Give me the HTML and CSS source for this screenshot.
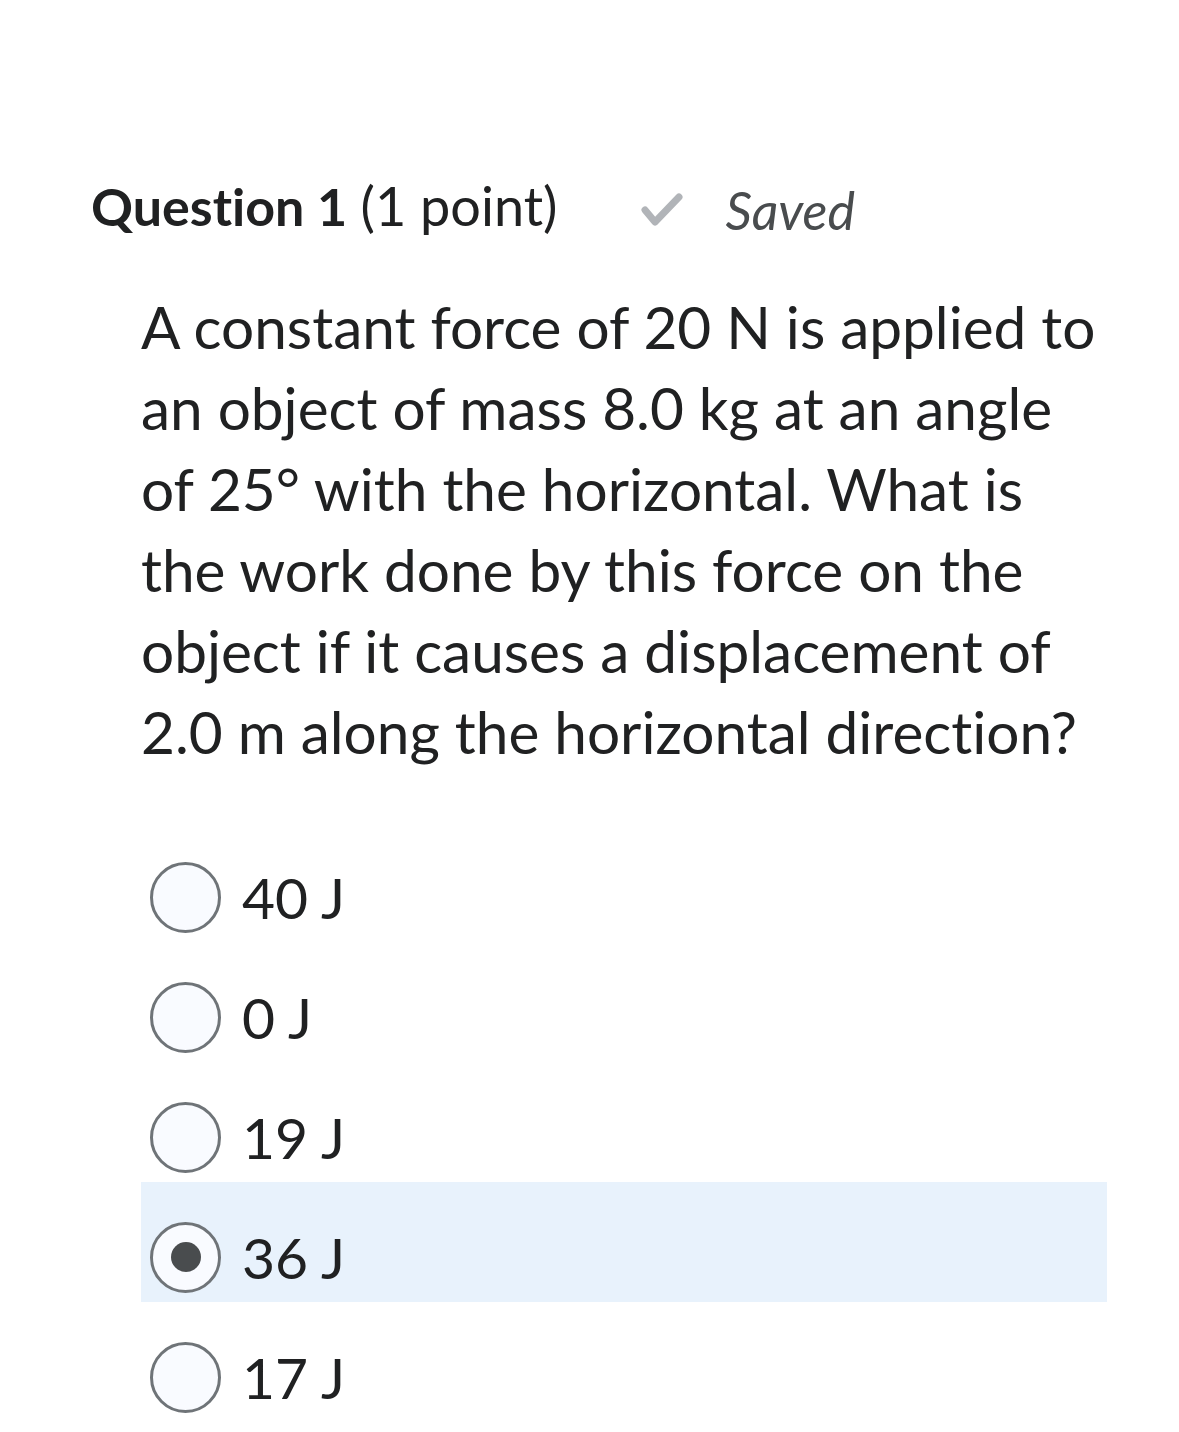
FILE: index.html
```html
<!DOCTYPE html>
<html>
<head>
    <meta name="viewport" content="width=device-width, initial-scale=1.0">
    <link rel="stylesheet" href="styles.css">
</head>
<body>
<div class="question">
    <div class="question-header">
        <h2 class="question-title"><strong>Question 1</strong> <span class="points">(1 point)</span></h2>
        <div class="saved">
            <svg class="check" width="46" height="36" viewBox="0 0 46 36">
                <path d="M6 18 L16 30 L40 5" fill="none" stroke="#b1b4b8" stroke-width="7" stroke-linecap="round" stroke-linejoin="round"/>
            </svg>
            <span>Saved</span>
        </div>
    </div>

    <div class="question-body">
        <p class="question-text">A constant force of 20 N is applied to an object of mass 8.0 kg at an angle of 25° with the horizontal. What is the work done by this force on the object if it causes a displacement of 2.0 m along the horizontal direction?</p>

        <div class="answers">
            <label class="answer">
                <span class="radio"></span>
                <span class="answer-text">40 J</span>
            </label>
            <label class="answer">
                <span class="radio"></span>
                <span class="answer-text">0 J</span>
            </label>
            <label class="answer">
                <span class="radio"></span>
                <span class="answer-text">19 J</span>
            </label>
            <label class="answer selected">
                <span class="radio checked"></span>
                <span class="answer-text">36 J</span>
            </label>
            <label class="answer">
                <span class="radio"></span>
                <span class="answer-text">17 J</span>
            </label>
        </div>
    </div>
</div>
</body>
</html>
```

FILE: styles.css
```css
body {
    font-family: Lato, "Open Sans", sans-serif;
    font-variant-ligatures: none;
    color: #202122;
    background: #fff;
    margin: 0;
    padding: 0;
}

.question {
    padding: 166px 72px 0 91px;
}

.question-header {
    display: flex;
    align-items: center;
    height: 80px;
}

.question-title {
    margin: 0;
    font-size: 52px;
    font-weight: normal;
    line-height: 1;
}

.question-title strong {
    font-weight: bold;
}

.points {
    font-size: 54px;
}

.saved {
    display: flex;
    align-items: center;
    margin-left: 82px;
    margin-top: 8px;
    color: #494c4e;
    font-style: italic;
    font-size: 52px;
}

.check {
    margin-right: 40px;
}

.question-body {
    padding-left: 50px;
    width: 966px;
}

.question-text {
    margin: 40px 0 0 0;
    font-size: 58.5px;
    line-height: 81px;
}

.answers {
    margin-top: 50px;
}

.answer {
    display: flex;
    align-items: center;
    box-sizing: border-box;
    height: 120px;
    padding: 30px 0 0 9px;
}

.answer.selected {
    background: #e8f2fc;
}

.radio {
    width: 65px;
    height: 65px;
    border: 3px solid #6f7478;
    border-radius: 50%;
    background: #f9fbff;
    display: flex;
    align-items: center;
    justify-content: center;
    flex-shrink: 0;
}

.radio.checked::after {
    content: "";
    width: 30px;
    height: 30px;
    border-radius: 50%;
    background: #494c4e;
}

.answer-text {
    margin-left: 21px;
    font-size: 57px;
}
```
